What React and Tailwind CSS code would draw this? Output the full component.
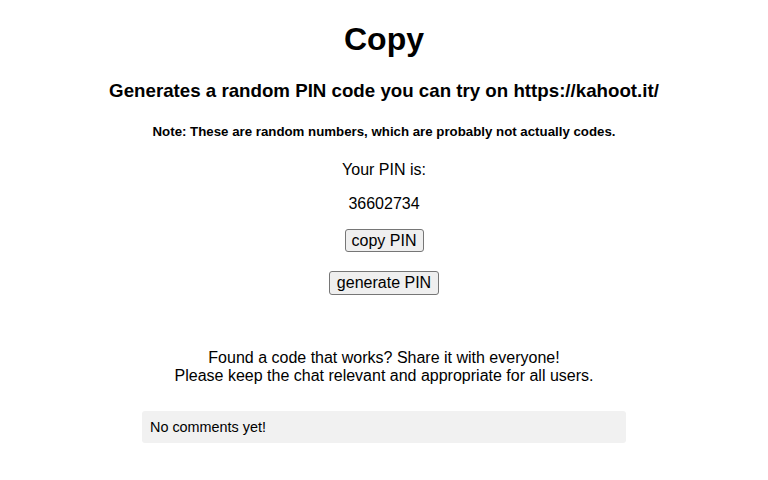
import { useState } from 'react';

function randomPin() {
    return String(Math.floor(10000000 + Math.random() * 90000000));
}

export default function App() {
    const [pin, setPin] = useState('36602734');

    return (
        <div className="min-h-[480px] bg-white text-black font-['Liberation_Sans',Arial,sans-serif] flex flex-col items-center">
            <h1 className="mt-[21px] text-[32px] leading-[37px] font-bold">Copy</h1>
            <h3 className="mt-[22px] text-[18.72px] leading-[21px] font-bold">
                Generates a random PIN code you can try on https://kahoot.it/
            </h3>
            <h5 className="mt-[23px] text-[13.28px] leading-[15px] font-bold">
                Note: These are random numbers, which are probably not actually codes.
            </h5>
            <p className="mt-[22px] text-base leading-[18px]">Your PIN is:</p>
            <p className="mt-[16px] text-base leading-[18px]">{pin}</p>

            {/* boutons */}
            <button
                onClick={() => navigator.clipboard?.writeText(pin)}
                className="mt-[16px] w-[79px] h-[23px] text-base leading-[18px] bg-[#efefef] border border-[#767676] rounded-[3px]"
            >
                copy PIN
            </button>
            <button
                onClick={() => setPin(randomPin())}
                className="mt-[19px] w-[110px] h-[24px] text-base leading-[18px] bg-[#efefef] border border-[#767676] rounded-[3px]"
            >
                generate PIN
            </button>

            <p className="mt-[54px] text-base leading-[18px] text-center">
                Found a code that works? Share it with everyone!
                <br />
                Please keep the chat relevant and appropriate for all users.
            </p>

            <div className="mt-[26px] w-[484px] h-[32px] px-[8px] pt-[2px] flex items-center bg-[#f1f1f1] rounded-[3px] text-[14.4px]">
                No comments yet!
            </div>
        </div>
    );
}
